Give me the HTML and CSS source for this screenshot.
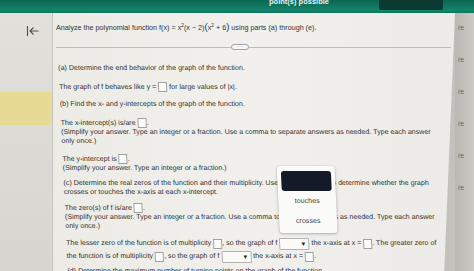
FILE: index.html
```html
<!DOCTYPE html>
<html lang="en">
<head>
<meta charset="utf-8">
<title>Polynomial function</title>
<link rel="stylesheet" href="styles.css">
</head>
<body>
<div class="screen">
  <header class="topbar">
    <span class="points">point(s) possible</span>
    <span class="topbtn"></span>
  </header>
  <div class="body">
    <aside class="sidebar">
      <svg class="back" width="14" height="12" viewBox="0 0 14 12" aria-hidden="true">
        <path d="M1.5 1v10M12.5 6H4M7.5 2.5L4 6l3.5 3.5" fill="none" stroke="#4e4e4e" stroke-width="1.1"/>
      </svg>
      <div class="highlight"></div>
    </aside>
    <main class="panel">
      <p class="question">Analyze the polynomial function f(x) = x<sup>2</sup>(x − 2)<span class="big">(</span>x<sup>2</sup> + 6<span class="big">)</span> using parts (a) through (e).</p>
      <div class="divider"><span class="rule first"></span><span class="pill">···</span><span class="rule"></span></div>
      <div class="content">
        <p class="line">(a) Determine the end behavior of the graph of the function.</p>
        <p class="line gap9">The graph of f behaves like y = <span class="box"></span> for large values of |x|.</p>
        <p class="line gap8">(b) Find the x- and y-intercepts of the graph of the function.</p>
        <div class="group gap9">
          <p class="line tall">The x-intercept(s) is/are <span class="box"></span>.</p>
          <p class="line">(Simplify your answer. Type an integer or a fraction. Use a comma to separate answers as needed. Type each answer</p>
          <p class="line">only once.)</p>
        </div>
        <div class="group gap8">
          <p class="line tall">The y-intercept is <span class="box"></span>.</p>
          <p class="line">(Simplify your answer. Type an integer or a fraction.)</p>
        </div>
        <div class="group gap6">
          <p class="line">(c) Determine the real zeros of the function and their multiplicity. Use this information to determine whether the graph</p>
          <p class="line">crosses or touches the x-axis at each x-intercept.</p>
        </div>
        <div class="group gap6">
          <p class="line tall">The zero(s) of f is/are <span class="box"></span>.</p>
          <p class="line">(Simplify your answer. Type an integer or a fraction. Use a comma to separate answers as needed. Type each answer</p>
          <p class="line">only once.)</p>
        </div>
        <div class="group gap6">
          <p class="line row">The lesser zero of the function is of multiplicity <span class="box"></span>, so the graph of f <span class="select"><span class="caret">▼</span></span> the x-axis at x = <span class="box"></span>. The greater zero of</p>
          <p class="line row">the function is of multiplicity <span class="box"></span>, so the graph of f <span class="select"><span class="caret">▼</span></span> the x-axis at x = <span class="box"></span>.</p>
        </div>
        <p class="line gap4">(d) Determine the maximum number of turning points on the graph of the function.</p>
        <div class="popup">
          <div class="opt selected"></div>
          <div class="opt">touches</div>
          <div class="opt">crosses</div>
        </div>
      </div>
    </main>
    <aside class="behind">
      <span>re</span><span>re</span><span>re</span><span>re</span><span>re</span><span>re</span>
    </aside>
  </div>
</div>
</body>
</html>
```
FILE: styles.css
```css
* { box-sizing: border-box; }
html, body { margin: 0; padding: 0; }
p { margin: 0; }
body {
  width: 474px;
  height: 271px;
  overflow: hidden;
  background: #c4c3be;
  font-family: "Liberation Sans", Arial, sans-serif;
  color: #333333;
}
.screen { width: 474px; height: 271px; display: flex; flex-direction: column; }

.topbar {
  height: 13px;
  flex: 0 0 13px;
  display: flex;
  align-items: flex-start;
  padding-left: 269px;
  background: linear-gradient(#0c6553, #13846a 80%, #0f7560);
  overflow: hidden;
}
.points {
  margin-top: -3px;
  font-size: 7.5px;
  line-height: 9px;
  font-weight: bold;
  color: #e6f2ee;
}
.topbtn {
  margin-left: 50px;
  width: 64px;
  height: 10px;
  background: #0a3a32;
  border-radius: 0 0 2px 2px;
}

.body { flex: 1; display: flex; background: #c2c1bc; }

.sidebar {
  flex: 0 0 53px;
  background: linear-gradient(#e1e0db, #d6d5d0);
  border-right: 1px solid #c4c4bf;
  display: flex;
  flex-direction: column;
}
.back { margin: 12px 0 0 26px; display: block; }
.highlight { margin-top: 55px; height: 33px; background: #e7da94; }

.panel {
  flex: 0 0 402px;
  position: relative;
  padding: 10px 0 0 3px;
  background: linear-gradient(90deg, #ecebe6, #f1f0ec 50%, #ecebe7);
  clip-path: polygon(0 0, 100% 0, calc(100% - 11px) 100%, 0 100%);
  font-size: 7.2px;
}
.question { line-height: 10px; white-space: nowrap; }
.question sup { font-size: 4.8px; vertical-align: 3px; line-height: 0; }
.big { font-size: 9.5px; line-height: 0; }

.divider {
  margin-top: 11px;
  height: 6px;
  display: flex;
  align-items: center;
  margin-right: 4px;
}
.rule { flex: 1; height: 1px; background: #bdbcb7; }
.rule.first { flex: 0 0 175px; }
.pill {
  width: 18px;
  height: 6px;
  border: 1px solid #a3a3a0;
  border-radius: 3px;
  background: #f6f6f4;
  font-size: 6px;
  line-height: 3px;
  text-align: center;
  color: #777;
}

.content {
  position: relative;
  margin-top: 14px;
  padding-left: 2px;
  font-size: 7.1px;
  transform: skewX(2.6deg);
  transform-origin: 0 0;
}
.line { line-height: 9px; white-space: nowrap; }
.line.tall { line-height: 10px; }
.line.row { line-height: 13px; }
.gap9 { margin-top: 9px; }
.gap8 { margin-top: 8px; }
.gap6 { margin-top: 6px; }
.gap4 { margin-top: 4px; }

.box {
  display: inline-block;
  width: 9px;
  height: 10px;
  border: 1px solid #a0a09c;
  background: #fbfbfa;
  vertical-align: middle;
}
.select {
  display: inline-flex;
  align-items: center;
  justify-content: flex-end;
  width: 30px;
  height: 12px;
  padding-right: 2px;
  border: 1px solid #b3b3b0;
  border-radius: 1px;
  background: #fafaf9;
  vertical-align: middle;
}
.caret { font-size: 6px; color: #222; line-height: 1; }

.popup {
  position: absolute;
  left: 216px;
  top: 102px;
  width: 58px;
  height: 67px;
  padding: 5px 4px 0;
  background: #fafaf8;
  border-radius: 3px;
  box-shadow: 0 1px 3px rgba(0,0,0,0.25), 0 0 1px rgba(0,0,0,0.2);
  display: flex;
  flex-direction: column;
}
.opt { height: 20px; line-height: 20px; text-align: center; font-size: 7.1px; color: #444; }
.opt.selected { background: #131b29; border-radius: 3px; }

.behind {
  flex: 1;
  display: flex;
  flex-direction: column;
  padding: 10px 0 0 3px;
  background: linear-gradient(90deg, #b8b7b2, #cbcac5);
  font-size: 7px;
  line-height: 10px;
  color: #6c6c6a;
}
.behind span { margin-bottom: 22px; }
```
